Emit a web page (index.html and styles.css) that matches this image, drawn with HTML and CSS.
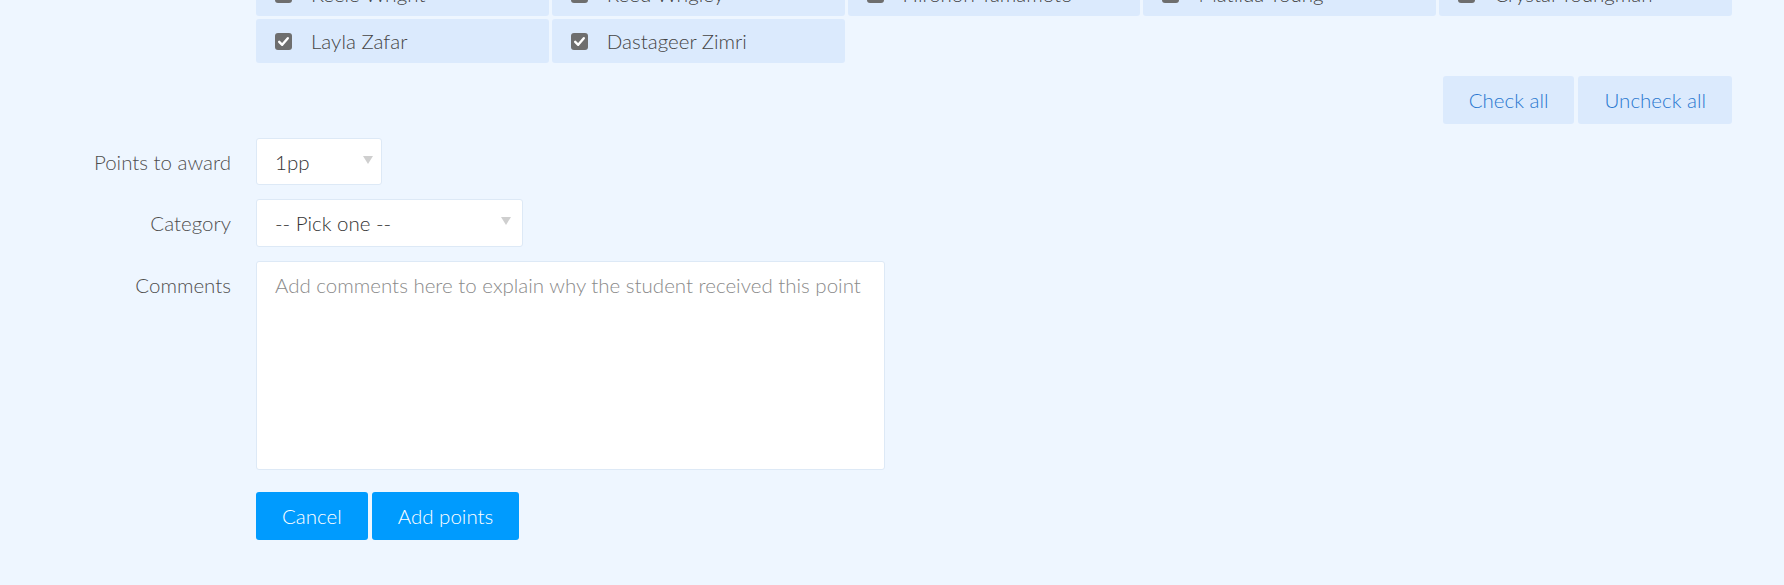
FILE: index.html
```html
<!DOCTYPE html>
<html lang="en">
<head>
<meta charset="utf-8">
<title>Add points</title>
<link rel="stylesheet" href="styles.css">
</head>
<body>
<form class="page">
  <div class="row">
    <div class="label"></div>
    <div class="field">
      <div class="students">
        <label class="student"><span class="box"><svg viewBox="0 0 17 17" width="17" height="17"><path d="M4.2 8.8 L7.2 11.8 L12.8 5.2" fill="none" stroke="#fff" stroke-width="2.4" stroke-linecap="round" stroke-linejoin="round"/></svg></span><span class="name">Keele Wright</span></label>
        <label class="student"><span class="box"><svg viewBox="0 0 17 17" width="17" height="17"><path d="M4.2 8.8 L7.2 11.8 L12.8 5.2" fill="none" stroke="#fff" stroke-width="2.4" stroke-linecap="round" stroke-linejoin="round"/></svg></span><span class="name">Reed Wrigley</span></label>
        <label class="student"><span class="box"><svg viewBox="0 0 17 17" width="17" height="17"><path d="M4.2 8.8 L7.2 11.8 L12.8 5.2" fill="none" stroke="#fff" stroke-width="2.4" stroke-linecap="round" stroke-linejoin="round"/></svg></span><span class="name">Hironori Yamamoto</span></label>
        <label class="student"><span class="box"><svg viewBox="0 0 17 17" width="17" height="17"><path d="M4.2 8.8 L7.2 11.8 L12.8 5.2" fill="none" stroke="#fff" stroke-width="2.4" stroke-linecap="round" stroke-linejoin="round"/></svg></span><span class="name">Matilda Young</span></label>
        <label class="student"><span class="box"><svg viewBox="0 0 17 17" width="17" height="17"><path d="M4.2 8.8 L7.2 11.8 L12.8 5.2" fill="none" stroke="#fff" stroke-width="2.4" stroke-linecap="round" stroke-linejoin="round"/></svg></span><span class="name">Crystal Youngman</span></label>
        <label class="student"><span class="box"><svg viewBox="0 0 17 17" width="17" height="17"><path d="M4.2 8.8 L7.2 11.8 L12.8 5.2" fill="none" stroke="#fff" stroke-width="2.4" stroke-linecap="round" stroke-linejoin="round"/></svg></span><span class="name">Layla Zafar</span></label>
        <label class="student"><span class="box"><svg viewBox="0 0 17 17" width="17" height="17"><path d="M4.2 8.8 L7.2 11.8 L12.8 5.2" fill="none" stroke="#fff" stroke-width="2.4" stroke-linecap="round" stroke-linejoin="round"/></svg></span><span class="name">Dastageer Zimri</span></label>
      </div>
      <div class="check-actions">
        <button type="button" class="btn-light">Check all</button>
        <button type="button" class="btn-light">Uncheck all</button>
      </div>
    </div>
  </div>

  <div class="row row-points">
    <div class="label">Points to award</div>
    <div class="field">
      <div class="select select-points"><span>1pp</span><span class="arrow"></span></div>
    </div>
  </div>

  <div class="row row-category">
    <div class="label">Category</div>
    <div class="field">
      <div class="select select-category"><span>-- Pick one --</span><span class="arrow"></span></div>
    </div>
  </div>

  <div class="row row-comments">
    <div class="label">Comments</div>
    <div class="field">
      <textarea class="comments" placeholder="Add comments here to explain why the student received this point"></textarea>
    </div>
  </div>

  <div class="row row-submit">
    <div class="label"></div>
    <div class="field actions">
      <button type="button" class="btn-primary">Cancel</button>
      <button type="button" class="btn-primary">Add points</button>
    </div>
  </div>
</form>
</body>
</html>
```

FILE: styles.css
```css
* { box-sizing: border-box; }

html, body {
  margin: 0;
  background: #eef6ff;
}

body {
  font-family: "Lato", "Liberation Sans", sans-serif;
  font-weight: 300;
  font-size: 20.5px;
  color: #444;
  height: 585px;
  overflow: hidden;
}

.page {
  display: flex;
  flex-direction: column;
  padding: 0 52px 0 0;
}

.row {
  display: flex;
  gap: 25px;
}

.label {
  width: 231px;
  flex: none;
  text-align: right;
  color: #4e4e4e;
  line-height: 26px;
}

.field {
  flex: 1;
  min-width: 0;
}

.students {
  margin-top: -28px;
  display: grid;
  grid-template-columns: repeat(5, 1fr);
  gap: 3px 3px;
}

.student {
  height: 44px;
  background: #dbeafd;
  border-radius: 3px;
  display: flex;
  align-items: center;
  padding-left: 19px;
  gap: 19px;
  color: #444;
}

.box {
  width: 17px;
  height: 17px;
  border-radius: 3px;
  background: #6e6e6e;
  display: flex;
  flex: none;
}

.check-actions {
  margin-top: 13px;
  display: flex;
  justify-content: flex-end;
  gap: 4px;
}

.btn-light {
  height: 48px;
  border: none;
  border-radius: 3px;
  background: #dbeafd;
  color: #2a78d0;
  font-family: inherit;
  font-weight: 300;
  font-size: 20.5px;
  padding: 0 26px;
}

.row-points { margin-top: 14px; align-items: center; }
.row-category { margin-top: 14px; align-items: center; }
.row-comments { margin-top: 14px; }
.row-comments .label { padding-top: 11px; }
.row-submit { margin-top: 22px; }

.select {
  height: 47px;
  background: #fff;
  border: 1px solid #dde9f6;
  border-radius: 3px;
  display: flex;
  align-items: center;
  justify-content: space-between;
  padding: 0 8px 0 18px;
  color: #333;
}

.select-points { width: 126px; }
.select-category { width: 267px; height: 48px; padding-right: 11px; }

.arrow {
  width: 0;
  height: 0;
  border-left: 5px solid transparent;
  border-right: 5px solid transparent;
  border-top: 8px solid #cfcfcf;
  margin-top: -4px;
}

.comments {
  display: block;
  width: 629px;
  height: 209px;
  background: #fff;
  border: 1px solid #dde9f6;
  border-radius: 3px;
  padding: 10px 18px;
  font-family: inherit;
  font-weight: 300;
  font-size: 20.5px;
  line-height: 26px;
  color: #333;
  resize: none;
  outline: none;
}

.comments::placeholder {
  color: #8a8a8a;
}

.actions {
  display: flex;
  gap: 4px;
}

.btn-primary {
  height: 48px;
  border: none;
  border-radius: 3px;
  background: #009bfe;
  color: #fff;
  font-family: inherit;
  font-weight: 300;
  font-size: 20.5px;
  padding: 0 26px;
}
```
